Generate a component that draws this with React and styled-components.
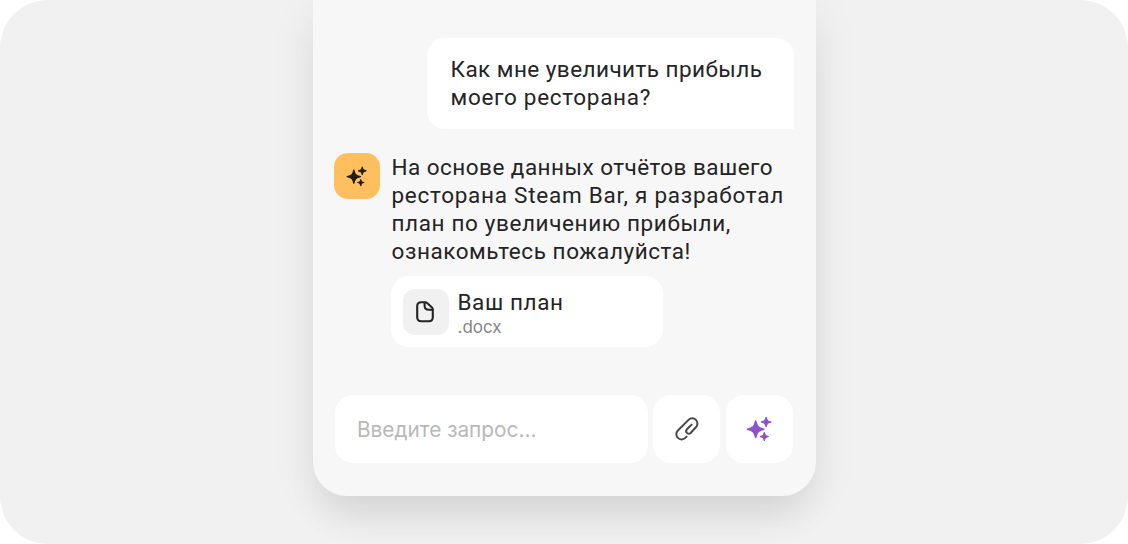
import React from 'react';
import styled, { createGlobalStyle } from 'styled-components';

const GlobalStyle = createGlobalStyle`
  * {
    box-sizing: border-box;
  }

  body {
    margin: 0;
    background: #fff;
    font-family: Roboto, 'Noto Sans', sans-serif;
    color: #242424;
  }
`;

const Stage = styled.div`
  display: flex;
  justify-content: center;
  align-items: flex-start;
  width: 1128px;
  height: 544px;
  overflow: hidden;
  background: #f1f1f1;
  border-radius: 48px;
`;

const Panel = styled.main`
  display: flex;
  flex-direction: column;
  width: 503px;
  height: 496px;
  padding: 38px 22px 33px;
  background: #f7f7f7;
  border-radius: 0 0 34px 34px;
  box-shadow: 0 28px 38px -10px rgba(0, 0, 0, 0.08), 0 10px 48px rgba(0, 0, 0, 0.07);
`;

const Bubble = styled.div`
  align-self: flex-end;
  width: 367px;
  height: 91px;
  padding: 17px 23px 17px 24px;
  background: #fff;
  border-radius: 18px 18px 0 18px;
`;

const Line = styled.span`
  display: block;
  font-size: 22.5px;
  line-height: 28px;
  white-space: nowrap;
  letter-spacing: ${props => props.$spacing || 0}px;
`;

const Answer = styled.div`
  display: flex;
  gap: 12px;
  margin-top: 24px;
`;

const Avatar = styled.div`
  display: flex;
  align-items: center;
  justify-content: center;
  flex: none;
  width: 46px;
  height: 46px;
  margin-left: -1px;
  background: #ffbf5f;
  border-radius: 14px;
  color: #241c10;
`;

const AnswerBody = styled.div`
  display: flex;
  flex-direction: column;
`;

const FileCard = styled.div`
  display: flex;
  align-items: center;
  gap: 9px;
  width: 272px;
  height: 71px;
  margin: 11px 0 0 -1px;
  padding: 0 12px;
  background: #fff;
  border-radius: 18px;
`;

const FileIcon = styled.div`
  display: flex;
  align-items: center;
  justify-content: center;
  width: 46px;
  height: 46px;
  background: #f1f1f1;
  border-radius: 12px;
`;

const FileText = styled.div`
  padding-top: 3px;
`;

const FileType = styled.div`
  font-family: Inter, sans-serif;
  font-size: 17px;
  line-height: 22px;
  color: #858585;
`;

const Composer = styled.div`
  display: flex;
  gap: 5.5px;
  margin: auto 1px 0 0;
`;

const PromptField = styled.input`
  flex: 1;
  min-width: 0;
  height: 68px;
  padding: 0 22.5px;
  border: none;
  outline: none;
  background: #fff;
  border-radius: 18px;
  font-family: Inter, sans-serif;
  font-size: 20.8px;

  &::placeholder {
    color: #b8b8b8;
    opacity: 1;
  }
`;

const IconButton = styled.button`
  display: flex;
  align-items: center;
  justify-content: center;
  width: 67px;
  height: 68px;
  padding: 0;
  border: none;
  background: #fff;
  border-radius: 18px;
  color: ${props => props.$color};
`;

function SparklesIcon({ size }) {
  return (
    <svg width={size} height={size} viewBox="0 0 26 26" fill="currentColor" stroke="currentColor" strokeWidth="1.4" strokeLinejoin="round">
      <path d="M9.7 4.9Q10.7 9.2 12.2 10.7Q13.7 12.2 18 13.2Q13.7 14.2 12.2 15.7Q10.7 17.2 9.7 21.5Q8.7 17.2 7.2 15.7Q5.7 14.2 1.4 13.2Q5.7 12.2 7.2 10.7Q8.7 9.2 9.7 4.9Z" />
      <path d="M20.1 1.4Q20.6 3.9 21.5 4.6Q22.2 5.5 24.7 6Q22.2 6.5 21.5 7.4Q20.6 8.1 20.1 10.6Q19.6 8.1 18.7 7.4Q18 6.5 15.5 6Q18 5.5 18.7 4.6Q19.6 3.9 20.1 1.4Z" />
      <path d="M18.3 16.7Q18.7 18.8 19.4 19.4Q20 20.1 22.1 20.5Q20 20.9 19.4 21.6Q18.7 22.2 18.3 24.3Q17.9 22.2 17.2 21.6Q16.6 20.9 14.5 20.5Q16.6 20.1 17.2 19.4Q17.9 18.8 18.3 16.7Z" />
    </svg>
  );
}

function ClipIcon() {
  return (
    <svg width="24" height="24" viewBox="0 0 24 24" fill="none" stroke="currentColor" strokeWidth="2" strokeLinecap="round" strokeLinejoin="round">
      <path d="M16.6 7.6L11.9 12.3A2.62 2.62 0 0 0 15.6 16L20.9 10.3A5.23 5.23 0 0 0 13.5 2.9L2.9 13.5A5.23 5.23 0 0 0 10.3 20.9L11.6 19.6" />
    </svg>
  );
}

function DocumentIcon() {
  return (
    <svg width="20" height="22" viewBox="0.5 0 20 22" fill="none" stroke="currentColor" strokeWidth="2.1" strokeLinejoin="round">
      <path d="M5.7 1.2H9.9Q10.9 1.2 11.6 1.9L16.5 6.5Q17.3 7.2 17.3 8.3V16.2Q17.3 20.2 13.3 20.2H5.7Q1.7 20.2 1.7 16.2V5.2Q1.7 1.2 5.7 1.2Z" />
      <path d="M9.1 1.2V4.4Q9.1 8.7 13.4 8.7H17.1" />
    </svg>
  );
}

function App() {
  return (
    <>
      <GlobalStyle />
      <Stage>
        <Panel>
          <Bubble>
            <Line $spacing={0.45}>Как мне увеличить прибыль</Line>
            <Line $spacing={0.7}>моего ресторана?</Line>
          </Bubble>
          <Answer>
            <Avatar>
              <SparklesIcon size={21} />
            </Avatar>
            <AnswerBody>
              <Line $spacing={0.47}>На основе данных отчётов вашего</Line>
              <Line $spacing={0.74}>ресторана Steam Bar, я разработал</Line>
              <Line $spacing={0.62}>план по увеличению прибыли,</Line>
              <Line $spacing={0.56}>ознакомьтесь пожалуйста!</Line>
              <FileCard>
                <FileIcon>
                  <DocumentIcon />
                </FileIcon>
                <FileText>
                  <Line $spacing={0.6}>Ваш план</Line>
                  <FileType>.docx</FileType>
                </FileText>
              </FileCard>
            </AnswerBody>
          </Answer>
          <Composer>
            <PromptField placeholder="Введите запрос..." />
            <IconButton $color="#484848" aria-label="Прикрепить файл">
              <ClipIcon />
            </IconButton>
            <IconButton $color="#8f50cc" aria-label="Отправить">
              <SparklesIcon size={26} />
            </IconButton>
          </Composer>
        </Panel>
      </Stage>
    </>
  );
}

export default App;
